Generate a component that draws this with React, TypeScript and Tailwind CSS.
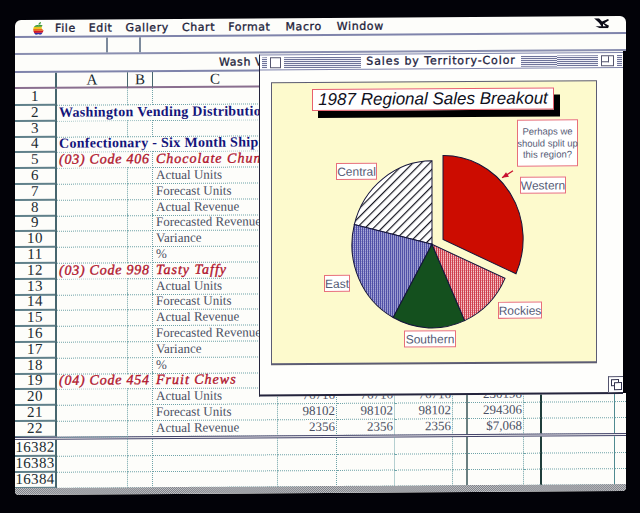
import React from "react";

const rowNums = [
  "1","2","3","4","5","6","7","8","9","10","11","12","13","14","15","16","17","18","19","20","21","22",
];

type Row = { a?: string; c?: string; kind?: "title" | "code"; nums?: string[] };
const rows: Row[] = [
  {},
  { a: "Washington Vending Distribution", kind: "title" },
  {},
  { a: "Confectionary - Six Month Shipments", kind: "title" },
  { a: "(03) Code 406", c: "Chocolate Chunk", kind: "code" },
  { c: "Actual Units" },
  { c: "Forecast Units" },
  { c: "Actual Revenue" },
  { c: "Forecasted Revenue" },
  { c: "Variance" },
  { c: "%" },
  { a: "(03) Code 998", c: "Tasty Taffy", kind: "code" },
  { c: "Actual Units" },
  { c: "Forecast Units" },
  { c: "Actual Revenue" },
  { c: "Forecasted Revenue" },
  { c: "Variance" },
  { c: "%" },
  { a: "(04) Code 454", c: "Fruit Chews", kind: "code" },
  { c: "Actual Units", nums: ["76716", "76716", "76716", "230198"] },
  { c: "Forecast Units", nums: ["98102", "98102", "98102", "294306"] },
  { c: "Actual Revenue", nums: ["2356", "2356", "2356", "$7,068"] },
];

const cols = "grid grid-cols-[42px_71px_25px_125px_59px_58px_58px_15px_56px_18px_73px_11px]";
const bottomDots = "border-b border-b-[#6fa3a8] [border-bottom-style:dotted]";
const cell = `${bottomDots} border-r border-r-[#6fa3a8] [border-right-style:dotted] overflow-hidden whitespace-nowrap`;
const heavyCell = `${bottomDots} border-r-2 border-r-[#6a7f80] [border-right-style:solid]`;
const darkCell = `${bottomDots} border-r-2 border-r-[#1f3d3a] [border-right-style:solid]`;
const tealCell = `${bottomDots} border-r border-r-[#4f8a90] [border-right-style:solid]`;
const serif = "font-['Liberation_Serif',serif]";
const chicago = "font-['DejaVu_Sans',sans-serif] [-webkit-text-stroke:0.3px_currentColor]";
const rowHead = "border-r-2 border-b-2 border-r-[#47666e] border-b-[#60808a] text-center text-[#1a2a30] text-[15px]";
const codeTextA = "text-[#b0142c] italic text-[14px] tracking-[0.75px] [-webkit-text-stroke:0.35px_currentColor]";
const codeTextC = "text-[#b0142c] italic text-[14px] tracking-[1px] [-webkit-text-stroke:0.35px_currentColor]";

function Stripes({ className = "flex-1" }: { className?: string }) {
  return <div className={`${className} h-[11px] bg-[repeating-linear-gradient(to_bottom,#6e7399_0,#6e7399_1px,#eeeef6_1px,#eeeef6_2px)]`} />;
}

function SheetRow({ r, num }: { r: Row; num: string }) {
  const isTitle = r.kind === "title";
  const isCode = r.kind === "code";
  return (
    <div className={`${cols} h-[15.8px] leading-[15px] ${serif} text-[13px] text-[#4a4f62]`}>
      <div className={`${rowHead} tracking-[0.5px]`}>{num}</div>
      <div
        className={`${cell} pl-[2px] relative z-10 overflow-visible ${r.a ? "border-r-transparent" : ""} ${
          isTitle ? "text-[#14147a] font-bold text-[14px] tracking-[0.3px]" : ""
        } ${isCode ? codeTextA : ""}`}
      >
        {r.a}
      </div>
      <div className={`${cell} ${isTitle ? "border-r-transparent" : ""}`} />
      <div className={`${cell} pl-[3px] ${isTitle ? "border-r-transparent" : ""} ${isCode ? codeTextC : ""}`}>
        {r.c}
      </div>
      {[0, 1, 2].map((i) => (
        <div key={i} className={`${cell} text-right pr-[1px]`}>
          {r.nums?.[i]}
        </div>
      ))}
      <div className={heavyCell} />
      <div className={`${cell} text-right pr-[1px]`}>{r.nums?.[3]}</div>
      <div className={darkCell} />
      <div className={tealCell} />
      <div className={bottomDots} />
    </div>
  );
}

function TailRow({ num }: { num: string }) {
  return (
    <div className={`${cols} h-[16px] leading-[15px] ${serif} text-[14px]`}>
      <div className={`${rowHead} tracking-[0.3px]`}>{num}</div>
      <div className={cell} />
      <div className={cell} />
      <div className={cell} />
      <div className={cell} />
      <div className={cell} />
      <div className={cell} />
      <div className={heavyCell} />
      <div className={cell} />
      <div className={darkCell} />
      <div className={tealCell} />
      <div className={bottomDots} />
    </div>
  );
}

function Apple() {
  return (
    <svg width="11" height="14" viewBox="0 0 11 14" className="shrink-0">
      <defs>
        <clipPath id="appleClip">
          <path d="M5.5 3.4C6.6 2.7 8.4 2.6 9.6 3.8 9 4.6 8.6 5.2 8.7 6.2 8.8 7.3 9.6 8 10.6 8.4 10 10.4 8.6 13 7.2 13 6.4 13 6.1 12.5 5.3 12.5 4.5 12.5 4.1 13 3.4 13 1.8 13 0.2 9.8 0.2 7.4 0.2 4.4 3.4 2.4 5.5 3.4Z" />
        </clipPath>
      </defs>
      <path d="M5.4 3C5.4 1.6 6.4.4 8 .2 8 1.8 7 2.8 5.4 3Z" fill="#3f9b3a" />
      <g clipPath="url(#appleClip)">
        <rect x="0" y="2" width="11" height="3" fill="#3f9b3a" />
        <rect x="0" y="5" width="11" height="2" fill="#e8c417" />
        <rect x="0" y="7" width="11" height="2" fill="#e8701a" />
        <rect x="0" y="9" width="11" height="2" fill="#d3182a" />
        <rect x="0" y="11" width="11" height="3" fill="#3a2f9e" />
      </g>
    </svg>
  );
}

function ChartArt() {
  return (
    <svg width="326" height="282" viewBox="0 0 326 282" className="block">
      <defs>
        <pattern id="diag" width="6" height="6" patternUnits="userSpaceOnUse" patternTransform="rotate(45)">
          <rect width="6" height="6" fill="#fff" />
          <rect width="1.2" height="6" fill="#14141e" />
        </pattern>
        <pattern id="blue" width="2" height="2" patternUnits="userSpaceOnUse">
          <rect width="2" height="2" fill="#c8c8e8" />
          <rect width="1" height="2" fill="#3f3f9e" />
          <rect x="1" width="1" height="1" fill="#7c7cc0" />
        </pattern>
        <pattern id="red" width="2" height="2" patternUnits="userSpaceOnUse">
          <rect width="2" height="2" fill="#fbe4e4" />
          <rect width="1" height="2" fill="#c8283a" />
          <rect x="1" width="1" height="1" fill="#e88a92" />
        </pattern>
      </defs>
      <g stroke="#14143a" strokeWidth="1">
        <path d="M160 162L160 78.5A80 83.5 0 0 0 82.3 141.8Z" fill="url(#diag)" />
        <path d="M160 162L82.3 141.8A80 83.5 0 0 0 121.2 235Z" fill="url(#blue)" />
        <path d="M160 162L121.2 235A80 83.5 0 0 0 192.7 238.5Z" fill="#14501e" />
        <path d="M160 162L192.7 238.5A80 83.5 0 0 0 233 196.5Z" fill="url(#red)" />
        <path d="M171 157.3L171 73.3A80 84 0 0 1 244 192Z" fill="#cc0c00" />
      </g>
      <path d="M241 89L230 96" stroke="#c8102e" strokeWidth="1.2" />
      <path d="M230 96L234 90.5L237 95Z" fill="#c8102e" />
    </svg>
  );
}

const boxBase =
  "absolute bg-white border border-[#e8707a] text-[#565b76] flex items-center justify-center font-['Liberation_Sans',sans-serif]";
const labelBox = `${boxBase} text-[12px] leading-none`;

export default function App() {
  return (
    <div className="w-[640px] h-[513px] bg-[#020208] overflow-hidden pt-[20px] pl-[15px]">
      <div className="w-[611px] h-[475px] bg-[#fdfdfa] rounded-t-[6px] rounded-b-[4px] origin-top-left skew-y-[-0.37deg] flex flex-col relative text-[#202038]">
        {/* Menu bar */}
        <div className={`h-[18px] pt-[2px] border-b-2 border-[#7f84ab] flex items-center ${chicago} text-[11px] tracking-[0.6px] shrink-0 relative`}>
          <div className="ml-[18px] mr-[11px] flex items-center"><Apple /></div>
          <span className="mr-[13px]">File</span>
          <span className="mr-[13px]">Edit</span>
          <span className="mr-[13px]">Gallery</span>
          <span className="mr-[13px]">Chart</span>
          <span className="mr-[15px]">Format</span>
          <span className="mr-[15px]">Macro</span>
          <span>Window</span>
          <svg width="16" height="10" viewBox="0 0 16 10" className="absolute right-[16px] top-[2px]">
            <path d="M0 0H5L8 3.2L14 .8L15 2L10.4 5L15 7.5L14 10H6L1.5 8H7.5L5 4.5Z" fill="#0b0b18" />
            <path d="M9 5.5L12 8H9Z" fill="#fdfdfa" />
          </svg>
        </div>
        {/* Formula bar */}
        <div className="h-[17px] border-b-2 border-[#8a8fb0] flex shrink-0">
          <div className="w-[93px] border-r-2 border-[#7c8a9c]" />
          <div className="w-[33px] border-r-2 border-[#7c8a9c]" />
        </div>
        {/* Sheet title */}
        <div className={`h-[18px] border-b-2 border-[#7f84ab] shrink-0 ${chicago} text-[11px] tracking-[0.6px] pl-[204px] leading-[18px] overflow-hidden whitespace-nowrap`}>
          Wash Vending Distribution
        </div>
        {/* Column headers */}
        <div className={`${cols} h-[16px] shrink-0 ${serif} text-[15px] leading-[15px] text-center text-[#1a2a30] border-b-2 border-[#8a6f8f]`}>
          <div className="border-r-2 border-[#47666e]" />
          <div className="border-r border-[#47666e]">A</div>
          <div className="border-r border-[#47666e]">B</div>
          <div className="border-r border-[#47666e]">C</div>
        </div>
        {/* Rows */}
        <div className="shrink-0">
          {rows.map((r, i) => (
            <SheetRow key={i} r={r} num={rowNums[i]} />
          ))}
        </div>
        <div className="h-[3px] border-y border-[#45456a] shrink-0 bg-[#f4f4f4]" />
        <div className="shrink-0">
          {["16382", "16383", "16384"].map((n) => (
            <TailRow key={n} num={n} />
          ))}
        </div>
        {/* Scrollbar */}
        <div className="flex-1 min-h-0 rounded-b-[4px] bg-[repeating-conic-gradient(#7d8088_0_25%,#d8d8d8_0_50%)] bg-[length:2px_2px]" />

        {/* Bezel edge beside the chart window */}
        <div className="absolute right-0 top-[35px] w-[3px] h-[342px] bg-[#020208] z-10" />

        {/* Chart window, overlapping the sheet */}
        <div className="absolute left-[244px] top-[36px] w-[364px] h-[342px] bg-[#fefefc] border-l border-b-2 border-[#24243c] z-20">
          <div className={`h-[16px] border-y border-[#7f84ab] flex items-center gap-[3px] pl-[2px] pr-[1px] ${chicago} text-[11px] tracking-[0.9px] text-[#20203c] bg-white`}>
            <Stripes className="w-[5px] shrink-0" />
            <div className="w-[11px] h-[11px] border border-[#55556f] bg-white shrink-0" />
            <Stripes />
            <span className="px-[2px] whitespace-nowrap">Sales by Territory-Color</span>
            <Stripes />
            <div className="w-[13px] h-[11px] border border-[#55556f] bg-white shrink-0 relative">
              <div className="absolute left-0 top-0 w-[7px] h-[6px] border-r border-b border-[#55556f]" />
            </div>
            <Stripes className="w-[5px] shrink-0" />
          </div>
          {/* Chart panel */}
          <div className="absolute left-[11px] top-[28px] w-[326px] h-[283px] bg-[#fdfacd] border border-[#5c5c74] border-b-2">
            <ChartArt />
            <div className="absolute left-[46px] top-[13px] w-[242px] h-[22px] bg-black" />
            <div className="absolute left-[40px] top-[6px] w-[242px] h-[22px] bg-white border border-[#e8606e] flex items-center justify-center font-['Liberation_Sans',sans-serif] italic text-[17px] text-[#10101c] whitespace-nowrap">
              1987 Regional Sales Breakout
            </div>
            <div className={`${boxBase} flex-col left-[245px] top-[38px] w-[61px] h-[47px] text-center text-[9.5px] leading-[11.5px] whitespace-nowrap`}>
              <span>Perhaps we</span>
              <span>should split up</span>
              <span>this region?</span>
            </div>
            <div className={`${labelBox} left-[64px] top-[80px] w-[41px] h-[17px]`}>Central</div>
            <div className={`${labelBox} left-[248px] top-[95px] w-[46px] h-[17px]`}>Western</div>
            <div className={`${labelBox} left-[52px] top-[192px] w-[26px] h-[17px]`}>East</div>
            <div className={`${labelBox} left-[226px] top-[220px] w-[44px] h-[17px]`}>Rockies</div>
            <div className={`${labelBox} left-[132px] top-[248px] w-[52px] h-[17px]`}>Southern</div>
          </div>
          {/* Size box */}
          <div className="absolute right-0 bottom-0 w-[15px] h-[16px] border-l border-t border-[#55556f] bg-white">
            <div className="absolute left-[2px] top-[2px] w-[8px] h-[7px] border border-[#33334f]" />
            <div className="absolute left-[5px] top-[5px] w-[8px] h-[8px] border border-[#33334f] bg-white" />
          </div>
        </div>
      </div>
    </div>
  );
}
